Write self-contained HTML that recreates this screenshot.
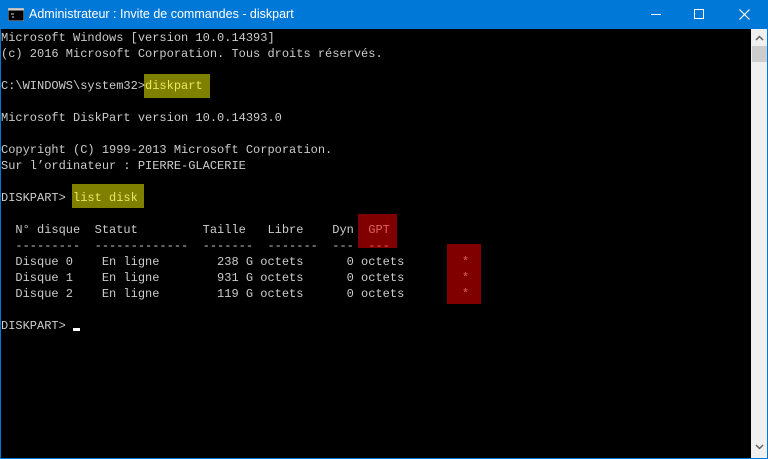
<!DOCTYPE html>
<html><head><style>
body{margin:0;width:768px;height:459px;overflow:hidden;background:#0078d7;position:relative;font-family:"Liberation Sans",sans-serif}
#title{position:absolute;left:0;top:0;width:768px;height:29px;background:#0078d7;color:#fff;font-size:12.5px}
#console{position:absolute;left:1px;top:29px;width:750px;height:429px;background:#000}
#sb{position:absolute;left:751px;top:29px;width:16px;height:429px;background:#f0f0f0}
pre{margin:0;position:absolute;left:1px;top:30px;font-family:"Liberation Mono",monospace;font-size:12px;line-height:16px;color:#cccccc}
.hl{position:absolute}
</style></head><body>
<div id="title">
<svg style="position:absolute;left:8px;top:8px" width="16" height="13"><rect x="0" y="0" width="16" height="13" fill="#000" stroke="#aaa" stroke-width="1"/><rect x="0.5" y="0.5" width="15" height="2" fill="#ccc"/><path d="M3 6h3M4 9h2" stroke="#ddd" stroke-width="1"/></svg>
<span style="position:absolute;left:29px;top:7px">Administrateur : Invite de commandes - diskpart</span>
<div style="position:absolute;left:651px;top:14px;width:10px;height:1px;background:#fff"></div>
<div style="position:absolute;left:694px;top:9px;width:8px;height:8px;border:1px solid #fff"></div>
<svg style="position:absolute;left:739px;top:9px" width="11" height="11"><path d="M0.5 0.5L10.5 10.5M10.5 0.5L0.5 10.5" stroke="#fff" stroke-width="1.2"/></svg>
</div>
<div id="console"></div>
<div id="sb">
<svg style="position:absolute;left:4px;top:6px" width="9" height="6"><path d="M1 5L4.5 1.5L8 5" stroke="#606060" stroke-width="1.5" fill="none"/></svg>
<div style="position:absolute;left:1px;top:17px;width:15px;height:16px;background:#cdcdcd"></div>
<svg style="position:absolute;left:4px;top:415px" width="9" height="6"><path d="M1 1L4.5 4.5L8 1" stroke="#606060" stroke-width="1.5" fill="none"/></svg>
</div>
<div class="hl" style="left:144px;top:74px;width:66px;height:24px;background:#808000"></div>
<div class="hl" style="left:72px;top:184px;width:72px;height:24px;background:#808000"></div>
<div class="hl" style="left:358px;top:214px;width:39px;height:34px;background:#800000"></div>
<div class="hl" style="left:447px;top:244px;width:34px;height:60px;background:#800000"></div>
<pre>Microsoft Windows [version 10.0.14393]
(c) 2016 Microsoft Corporation. Tous droits réservés.

C:\WINDOWS\system32&gt;<span style="color:#e8e860">diskpart</span>

Microsoft DiskPart version 10.0.14393.0

Copyright (C) 1999-2013 Microsoft Corporation.
Sur l’ordinateur : PIERRE-GLACERIE

DISKPART&gt; <span style="color:#e8e860">list disk</span>

  N° disque  Statut         Taille   Libre    Dyn  <span style="color:#e06060">GPT</span>
  ---------  -------------  -------  -------  ---  <span style="color:#e06060">---</span>
  Disque 0    En ligne        238 G octets      0 octets        <span style="color:#e06060">*</span>
  Disque 1    En ligne        931 G octets      0 octets        <span style="color:#e06060">*</span>
  Disque 2    En ligne        119 G octets      0 octets        <span style="color:#e06060">*</span>

DISKPART&gt; <span style="display:inline-block;width:7px;height:3px;background:#fff;vertical-align:-2px"></span></pre>
</body></html>
